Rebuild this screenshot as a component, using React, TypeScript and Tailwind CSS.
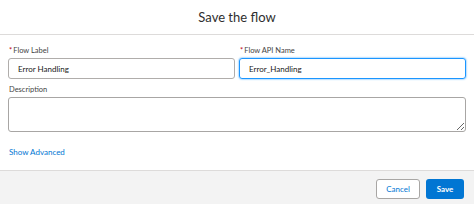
export default function App() {
  return (
    <div className="w-[474px] h-[204px] bg-white flex flex-col font-['Lato',sans-serif] text-[#181818] overflow-hidden">
      <div className="h-[35px] flex items-center justify-center border-b border-[#dddbda]">
        <h2 className="text-[13px] leading-none pt-[1px] text-[#2e2e2e]">Save the flow</h2>
      </div>

      <div className="flex-1 px-[8px] pt-[10px]">
        <div className="flex gap-[4px]">
          <div className="flex-1">
            <label className="block text-[7.5px] leading-[12px] pl-[1px] text-[#444]">
              <span className="text-[#ba0517] mr-[1px]">*</span>Flow Label
            </label>
            <input
              defaultValue="Error Handling"
              className="block mt-[1px] w-full h-[21px] px-[9px] text-[8px] border border-[#b0adab] rounded-[3px] outline-none text-[#181818]"
            />
          </div>
          <div className="flex-1">
            <label className="block text-[7.5px] leading-[12px] pl-[1px] text-[#444]">
              <span className="text-[#ba0517] mr-[1px]">*</span>Flow API Name
            </label>
            <input
              defaultValue="Error_Handling"
              className="block mt-[1px] w-full h-[21px] px-[9px] text-[8px] border border-[#1b96ff] rounded-[3px] outline-none shadow-[0_0_2px_#1b96ff] text-[#181818]"
            />
          </div>
        </div>

        <label className="block mt-[5px] text-[7.5px] leading-[12px] pl-[1px] text-[#444]">Description</label>
        <textarea className="mt-[1px] block w-full h-[35px] border border-[#a8a6a4] rounded-[3px] outline-none" />

        <div className="mt-[14px] text-[8px] leading-[12px] text-[#0176d3] pl-[1px]">Show Advanced</div>
      </div>

      <div className="h-[34px] border-t border-[#dddbda] bg-[#f3f3f3] flex items-center justify-end gap-[6px] pr-[10px] pt-[2px]">
        <button className="h-[20px] w-[44px] rounded-[3px] border border-[#a8a6a4] bg-white text-[8px] text-[#0176d3]">Cancel</button>
        <button className="h-[20px] w-[38px] rounded-[3px] bg-[#0176d3] text-[8px] font-bold text-white">Save</button>
      </div>
    </div>
  );
}
